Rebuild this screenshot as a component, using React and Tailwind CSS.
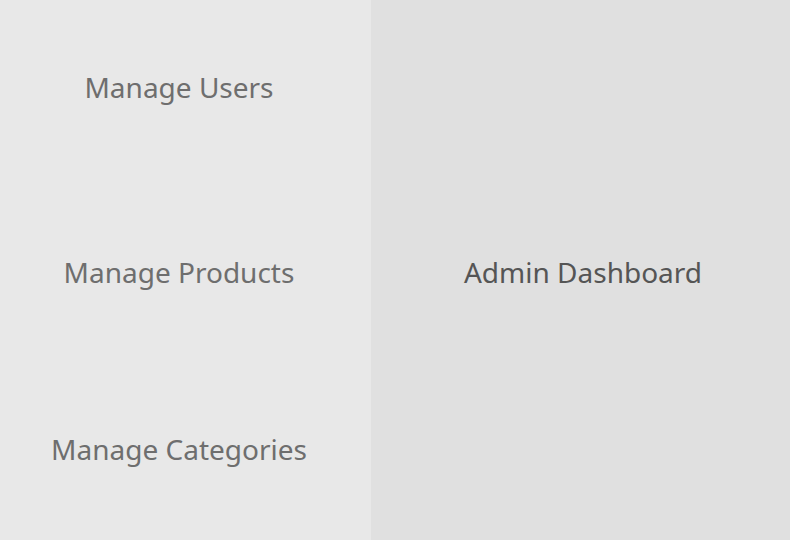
export default function App() {
  const links = ['Manage Users', 'Manage Products', 'Manage Categories'];
  return (
    <div className="flex h-[540px] w-full" style={{ fontFamily: '"Noto Sans", "Open Sans", sans-serif' }}>
      <div className="flex w-[371px] flex-col bg-[#e8e8e8] pr-[13px]">
        <div className="flex flex-1 items-center justify-center pb-[8px] text-[28px] text-[#6e6e6e]">{links[0]}</div>
        <div className="flex flex-1 items-center justify-center pt-[2px] text-[28px] text-[#6e6e6e]">{links[1]}</div>
        <div className="flex flex-1 items-center justify-center pt-[2px] pb-[4px] text-[28px] text-[#6e6e6e]">{links[2]}</div>
      </div>
      <div className="flex flex-1 items-center justify-center bg-[#e0e0e0] pl-[5px] pt-[4px] text-[28px] text-[#555555]">
        Admin Dashboard
      </div>
    </div>
  );
}
